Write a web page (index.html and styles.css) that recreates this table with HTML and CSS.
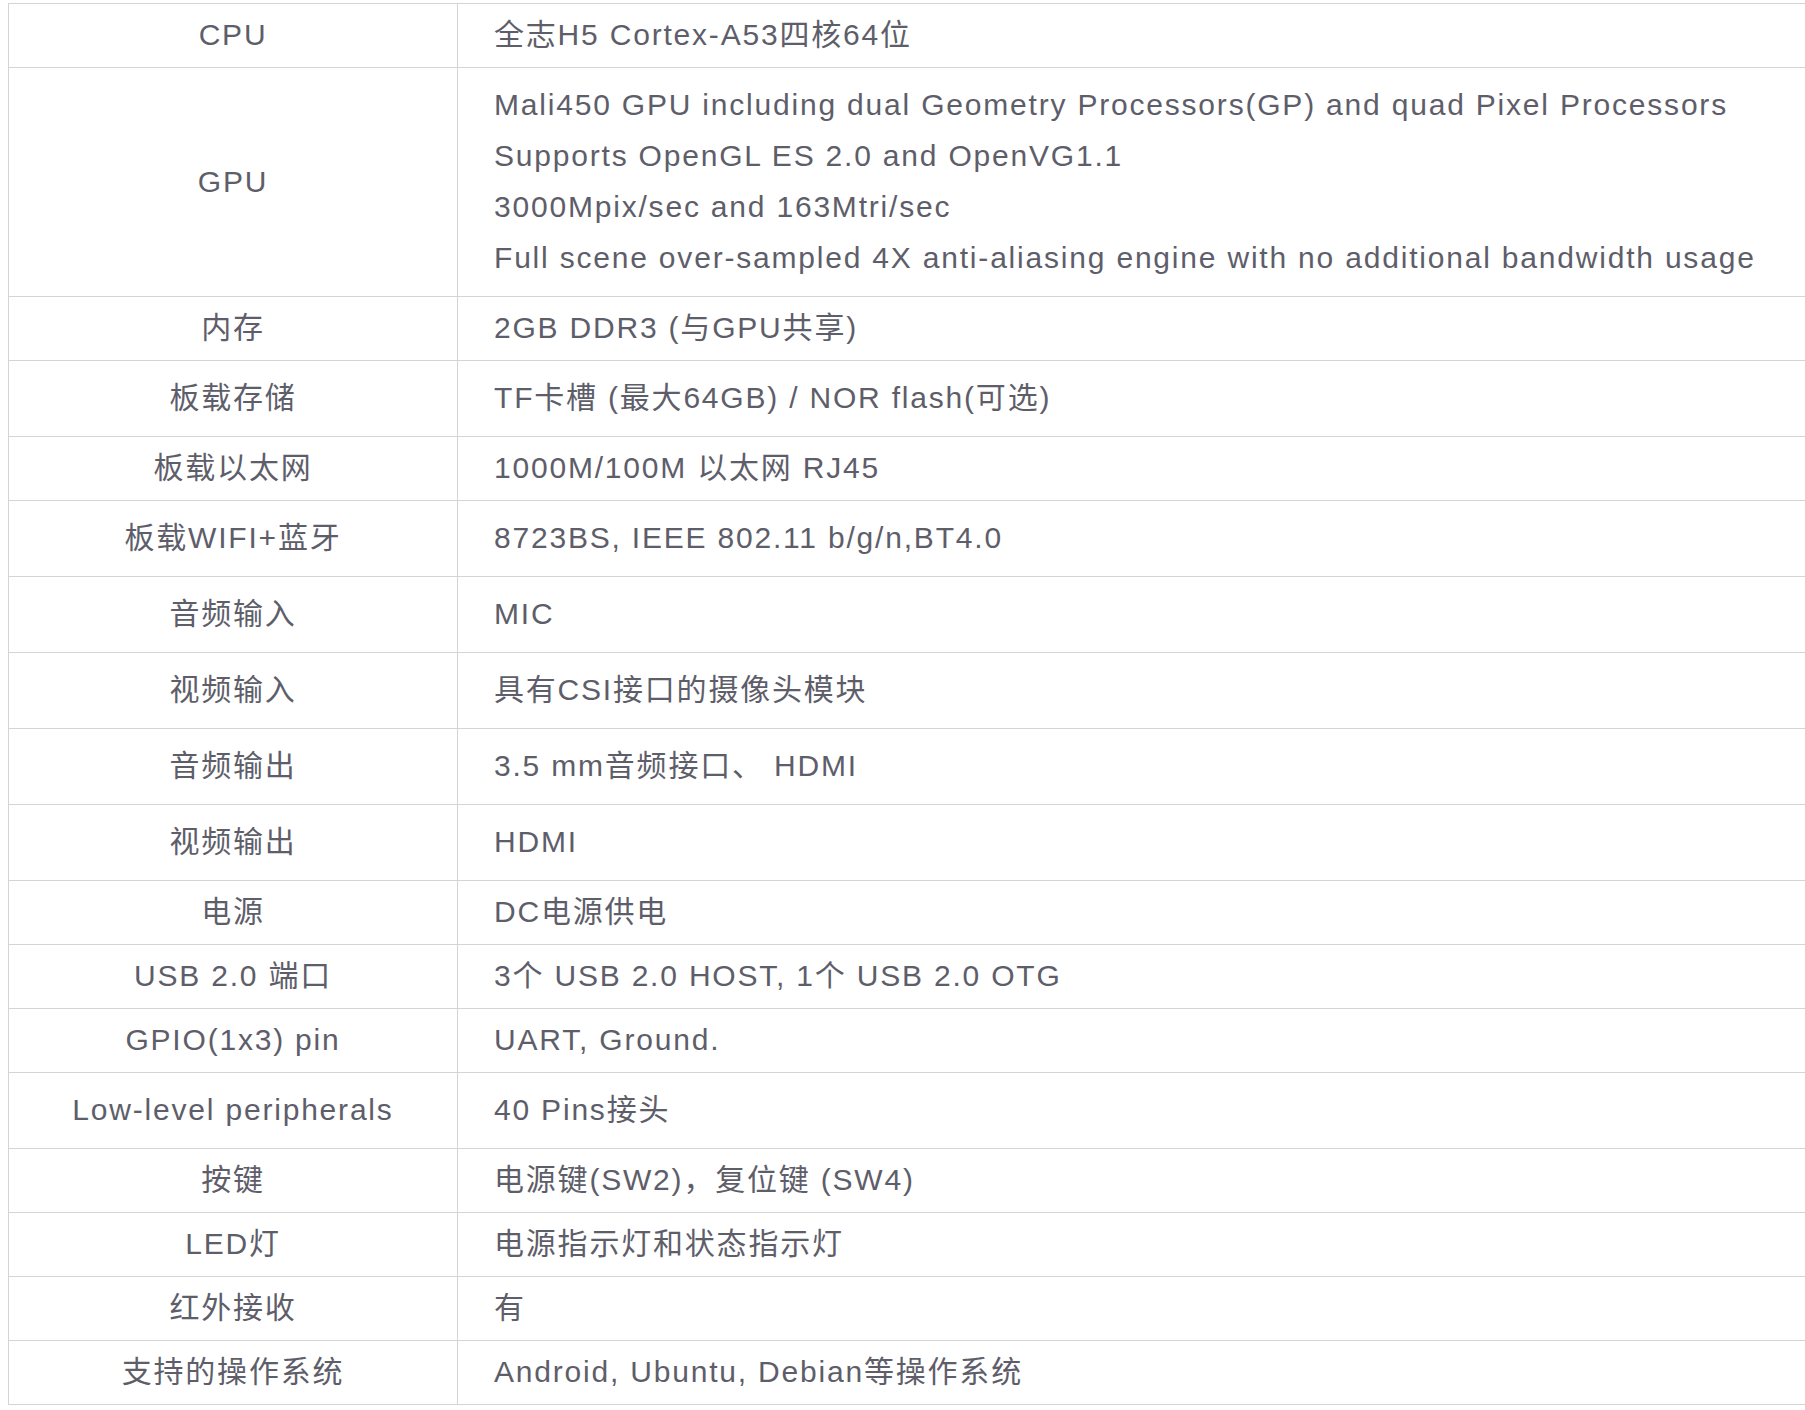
FILE: index.html
```html
<!DOCTYPE html>
<html lang="zh-CN">
<head>
<meta charset="utf-8">
<title>规格参数</title>
<link rel="stylesheet" href="styles.css">
</head>
<body>
<div class="wrap">
<table class="spec">
<colgroup><col class="c-key"><col class="c-val"></colgroup>
<tbody>
<tr><td class="key">CPU</td><td class="val">全志H5 Cortex-A53四核64位</td></tr>
<tr class="tall"><td class="key">GPU</td><td class="val">Mali450 GPU including dual Geometry Processors(GP) and quad Pixel Processors<br>Supports OpenGL ES 2.0 and OpenVG1.1<br>3000Mpix/sec and 163Mtri/sec<br>Full scene over-sampled 4X anti-aliasing engine with no additional bandwidth usage</td></tr>
<tr><td class="key">内存</td><td class="val">2GB DDR3 (与GPU共享)</td></tr>
<tr class="tall"><td class="key">板载存储</td><td class="val">TF卡槽 (最大64GB) / NOR flash(可选)</td></tr>
<tr><td class="key">板载以太网</td><td class="val">1000M/100M 以太网 RJ45</td></tr>
<tr class="tall"><td class="key">板载WIFI+蓝牙</td><td class="val">8723BS, IEEE 802.11 b/g/n,BT4.0</td></tr>
<tr class="tall"><td class="key">音频输入</td><td class="val">MIC</td></tr>
<tr class="tall"><td class="key">视频输入</td><td class="val">具有CSI接口的摄像头模块</td></tr>
<tr class="tall"><td class="key">音频输出</td><td class="val">3.5 mm音频接口、 HDMI</td></tr>
<tr class="tall"><td class="key">视频输出</td><td class="val">HDMI</td></tr>
<tr><td class="key">电源</td><td class="val">DC电源供电</td></tr>
<tr><td class="key">USB 2.0 端口</td><td class="val">3个 USB 2.0 HOST, 1个 USB 2.0 OTG</td></tr>
<tr><td class="key">GPIO(1x3) pin</td><td class="val">UART, Ground.</td></tr>
<tr class="tall"><td class="key">Low-level peripherals</td><td class="val">40 Pins接头</td></tr>
<tr><td class="key">按键</td><td class="val">电源键(SW2)，复位键 (SW4)</td></tr>
<tr><td class="key">LED灯</td><td class="val">电源指示灯和状态指示灯</td></tr>
<tr><td class="key">红外接收</td><td class="val">有</td></tr>
<tr><td class="key">支持的操作系统</td><td class="val">Android, Ubuntu, Debian等操作系统</td></tr>
</tbody>
</table>
</div>
</body>
</html>
```
FILE: styles.css
```css
html, body {
  margin: 0;
  padding: 0;
  background: #ffffff;
  overflow: hidden;
}
.wrap {
  padding: 3px 0 0 8px;
  overflow: hidden;
}
.spec {
  border-collapse: collapse;
  table-layout: fixed;
  width: 1900px;
  font-family: "Liberation Sans", "Noto Sans CJK SC", sans-serif;
  font-size: 30px;
  line-height: 51px;
  letter-spacing: 1.8px;
  color: #5e5e6a;
}
.c-key { width: 449px; }
.spec td {
  border: 1px solid #d4d4d4;
  padding: 5px 36px 7px;
  vertical-align: middle;
}
.spec tr.tall td {
  padding-top: 11px;
  padding-bottom: 13px;
}
.spec td.key {
  text-align: center;
  padding-left: 10px;
  padding-right: 10px;
}
.spec td.val {
  text-align: left;
}
```
